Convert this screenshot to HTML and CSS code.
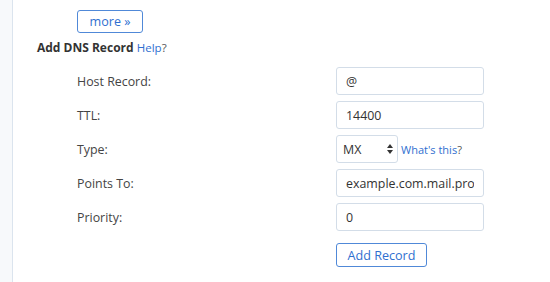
FILE: index.html
```html
<!DOCTYPE html>
<html lang="en">
<head>
  <meta charset="UTF-8">
  <title>Add DNS Record</title>
  <link rel="stylesheet" href="styles.css">
</head>
<body>
  <div class="page">
    <div class="side"></div>
    <div class="main">
      <div class="more-row">
        <button class="btn more">more &raquo;</button>
      </div>
      <h3 class="title">Add DNS Record <span class="help"><a href="#">Help</a>?</span></h3>
      <form class="dns-form">
        <div class="row">
          <label>Host Record:</label>
          <input type="text" value="@">
        </div>
        <div class="row">
          <label>TTL:</label>
          <input type="text" value="14400">
        </div>
        <div class="row">
          <label>Type:</label>
          <div class="select-wrap">
            <select>
              <option>MX</option>
              <option>A</option>
              <option>CNAME</option>
              <option>TXT</option>
            </select>
            <svg class="arrows" viewBox="0 0 6 10"><path d="M3 0L6 4H0z M3 10L0 6H6z"/></svg>
          </div>
          <span class="whats"><a href="#">What's this</a>?</span>
        </div>
        <div class="row">
          <label>Points To:</label>
          <input type="text" value="example.com.mail.protection.outlook.com">
        </div>
        <div class="row">
          <label>Priority:</label>
          <input type="text" value="0">
        </div>
        <div class="row">
          <label></label>
          <button type="button" class="btn add">Add Record</button>
        </div>
      </form>
    </div>
  </div>
</body>
</html>
```

FILE: styles.css
```css
body {
  margin: 0;
  background: #ffffff;
  font-family: 'Open Sans', sans-serif;
  font-size: 12.4px;
  color: #444444;
}
.page {
  display: flex;
  height: 282px;
}
.side {
  width: 12px;
  background: #f7f9fb;
  border-right: 1px solid #dbe4ee;
}
.main {
  flex: 1;
  padding-left: 24px;
}
.more-row {
  padding: 10px 0 0 40px;
}
.btn {
  font-family: 'Open Sans', sans-serif;
  font-size: 12.6px;
  color: #2f6fd0;
  background: #ffffff;
  border: 1px solid #5089d8;
  border-radius: 3px;
  cursor: pointer;
  padding: 0;
}
.more {
  width: 66px;
  height: 23px;
}
.title {
  margin: 5px 0 0;
  font-size: 12px;
  font-weight: bold;
  line-height: 20px;
  color: #333333;
}
.help {
  font-weight: normal;
  font-size: 11.5px;
  color: #555555;
}
.help a, .whats a {
  color: #2f6fd0;
  text-decoration: none;
}
.dns-form {
  margin: 9px 0 0 40px;
}
.row {
  display: flex;
  align-items: center;
  height: 28px;
  margin-bottom: 6px;
}
.row label {
  width: 259px;
  flex: none;
}
.row input {
  box-sizing: border-box;
  width: 148px;
  height: 28px;
  border: 1px solid #d3dde8;
  border-radius: 3px;
  padding: 0 9px;
  font-family: 'Open Sans', sans-serif;
  font-size: 12.4px;
  color: #333333;
  outline: none;
}
.select-wrap {
  position: relative;
  width: 62px;
  height: 28px;
}
.select-wrap select {
  appearance: none;
  -webkit-appearance: none;
  box-sizing: border-box;
  width: 62px;
  height: 28px;
  border: 1px solid #d3dde8;
  border-radius: 3px;
  background: #ffffff;
  padding: 0 6px;
  font-family: 'Open Sans', sans-serif;
  font-size: 12.4px;
  color: #333333;
}
.arrows {
  position: absolute;
  right: 5px;
  top: 9px;
  width: 6px;
  height: 10px;
  fill: #333333;
  pointer-events: none;
}
.whats {
  margin-left: 3px;
  font-size: 11px;
  color: #555555;
}
.add {
  width: 91px;
  height: 24px;
  margin-top: 8px;
}
```
